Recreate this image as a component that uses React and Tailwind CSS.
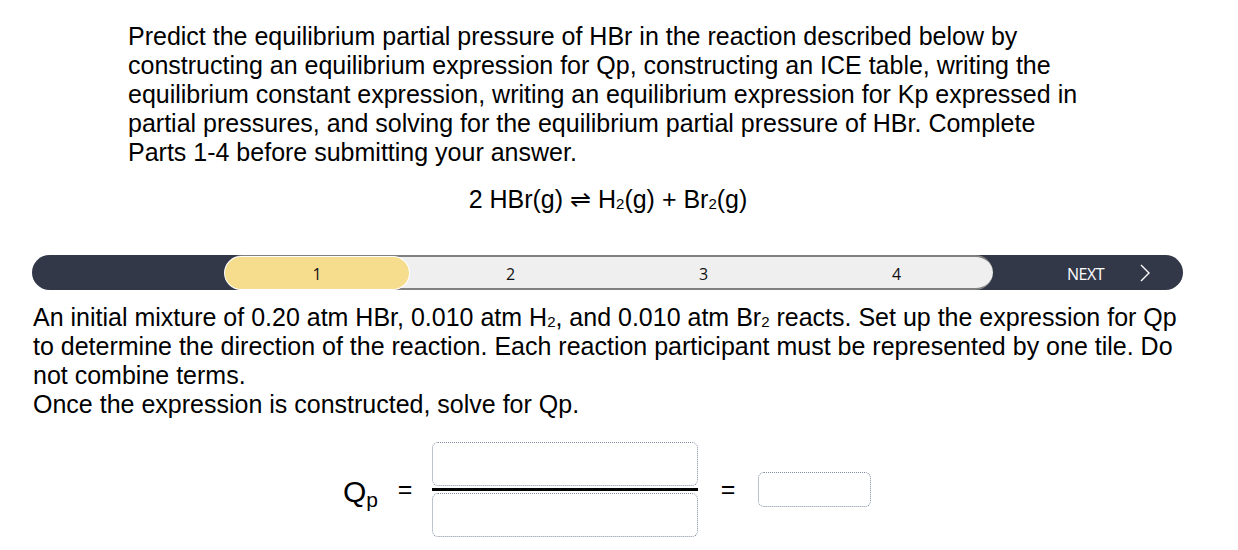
import React from "react";

const Sub = ({ children }) => (
  <span className="text-[15px] leading-none relative top-[1px]">{children}</span>
);

export default function App() {
  return (
    <div
      className="w-[1238px] h-[550px] bg-white text-black overflow-hidden"
      style={{ fontFamily: '"Liberation Sans", Arial, sans-serif' }}
    >
      <div className="ml-[128px] w-[1000px] pt-[22px] text-[25px] leading-[29px]">
        <p>
          Predict the equilibrium partial pressure of HBr in the reaction described below by
          <br />
          constructing an equilibrium expression for Qp, constructing an ICE table, writing the
          <br />
          equilibrium constant expression, writing an equilibrium expression for Kp expressed in
          <br />
          partial pressures, and solving for the equilibrium partial pressure of HBr. Complete
          <br />
          Parts 1-4 before submitting your answer.
        </p>
        <p className="mt-[18px] w-[960px] text-center">
          2 HBr(g) ⇌ H<Sub>2</Sub>(g) + Br<Sub>2</Sub>(g)
        </p>
      </div>

      <div className="ml-[32px] w-[1151px]">
        <div
          className="mt-[41px] h-[35px] rounded-full bg-[#323848] flex items-stretch"
          style={{ fontFamily: '"Open Sans", "Noto Sans", sans-serif' }}
        >
          <div className="w-[193px] shrink-0" />
          <div className="w-[768px] shrink-0 flex items-center rounded-full bg-[#efefef] border-y-2 border-[#808080] text-[16px] text-[#111]">
            <div className="w-[184px] h-[32px] shrink-0 rounded-full bg-[#f6dd8e] ring-1 ring-white flex items-center justify-center pt-[2px]">
              1
            </div>
            <div className="w-[5px] shrink-0" />
            <div className="w-[193px] shrink-0 text-center pt-[2px]">2</div>
            <div className="w-[193px] shrink-0 text-center pt-[2px]">3</div>
            <div className="w-[193px] shrink-0 text-center pt-[2px]">4</div>
          </div>
          <div className="flex-1 flex items-center text-white text-[16px]">
            <span className="ml-[74px] tracking-[-0.5px] pt-[2px]">NEXT</span>
            <svg
              className="ml-[35px]"
              width="12"
              height="18"
              viewBox="0 0 12 18"
              fill="none"
              stroke="white"
              strokeWidth="1.4"
            >
              <polyline points="2,1 10,9 2,17" />
            </svg>
          </div>
        </div>

        <p className="mt-[13px] pl-[1px] w-[1200px] text-[25px] leading-[29px]">
          An initial mixture of 0.20 atm HBr, 0.010 atm H<Sub>2</Sub>, and 0.010 atm Br<Sub>2</Sub> reacts. Set up the expression for Qp
          <br />
          to determine the direction of the reaction. Each reaction participant must be represented by one tile. Do
          <br />
          not combine terms.
          <br />
          Once the expression is constructed, solve for Qp.
        </p>

        <div className="mt-[23px] flex items-center">
          <div className="ml-[311px] w-[56px] text-[30px] leading-none relative top-[2px]">
            Q<span className="text-[21px] relative top-[5px]">p</span>
          </div>
          <div className="text-[25px] w-[66px] text-center relative left-[-27px]">=</div>
          <div className="ml-[-33px] w-[266px] flex flex-col">
            <div className="h-[44px] rounded-[6px] border border-dotted border-[#7f8aa0]" />
            <div className="mt-[2px] h-[3px] bg-black" />
            <div className="mt-[2px] h-[44px] rounded-[6px] border border-dotted border-[#7f8aa0]" />
          </div>
          <div className="w-[60px] text-center text-[25px]">=</div>
          <div className="h-[35px] w-[113px] rounded-[6px] border border-dotted border-[#7f8aa0]" />
        </div>
      </div>
    </div>
  );
}
